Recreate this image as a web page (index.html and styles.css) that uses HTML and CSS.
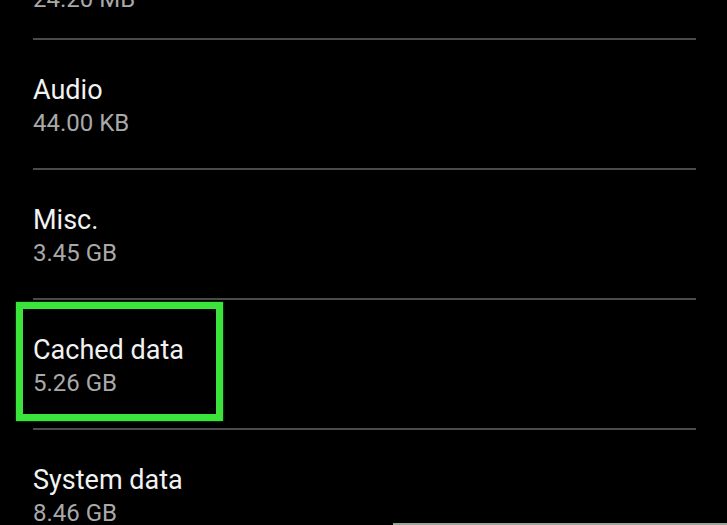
FILE: index.html
```html
<!DOCTYPE html>
<html lang="en">
<head>
<meta charset="utf-8">
<title>Storage</title>
<link rel="stylesheet" href="styles.css">
</head>
<body>
<main class="screen">
  <ul class="list">
    <li class="row row--first">
      <div class="title">Apps</div>
      <div class="sub">24.20 MB</div>
    </li>
    <li class="row">
      <div class="title">Audio</div>
      <div class="sub">44.00 KB</div>
    </li>
    <li class="row">
      <div class="title">Misc.</div>
      <div class="sub">3.45 GB</div>
    </li>
    <li class="row row--highlight">
      <div class="title">Cached data</div>
      <div class="sub">5.26 GB</div>
      <span class="highlight"></span>
    </li>
    <li class="row">
      <div class="title">System data</div>
      <div class="sub">8.46 GB</div>
    </li>
  </ul>
  <div class="handle"></div>
</main>
</body>
</html>
```
FILE: styles.css
```css
html, body {
  margin: 0;
  padding: 0;
  background: #000;
}
.screen {
  position: relative;
  width: 727px;
  height: 525px;
  overflow: hidden;
  background: #000;
  font-family: Roboto, "Noto Sans", "Liberation Sans", sans-serif;
}
.list {
  list-style: none;
  margin: -84px 0 0 0;
  padding: 0 31px 0 33px;
}
.row {
  position: relative;
  padding: 34px 0 28px 0;
  border-bottom: 2px solid #4b4b4b;
}
.row--first {
  padding-bottom: 22px;
}
.title {
  font-size: 27px;
  line-height: 32px;
  color: #f2f2f2;
}
.sub {
  font-size: 24px;
  line-height: 34px;
  color: #a9a9a9;
}
.highlight {
  position: absolute;
  left: -17px;
  top: 2px;
  width: 193px;
  height: 105px;
  border: 7px solid #3be43b;
  box-shadow: 0 0 2px rgba(59, 228, 59, 0.5);
}
.handle {
  position: absolute;
  left: 393px;
  right: 0;
  bottom: 0;
  height: 2px;
  background: #9aa598;
}
```
